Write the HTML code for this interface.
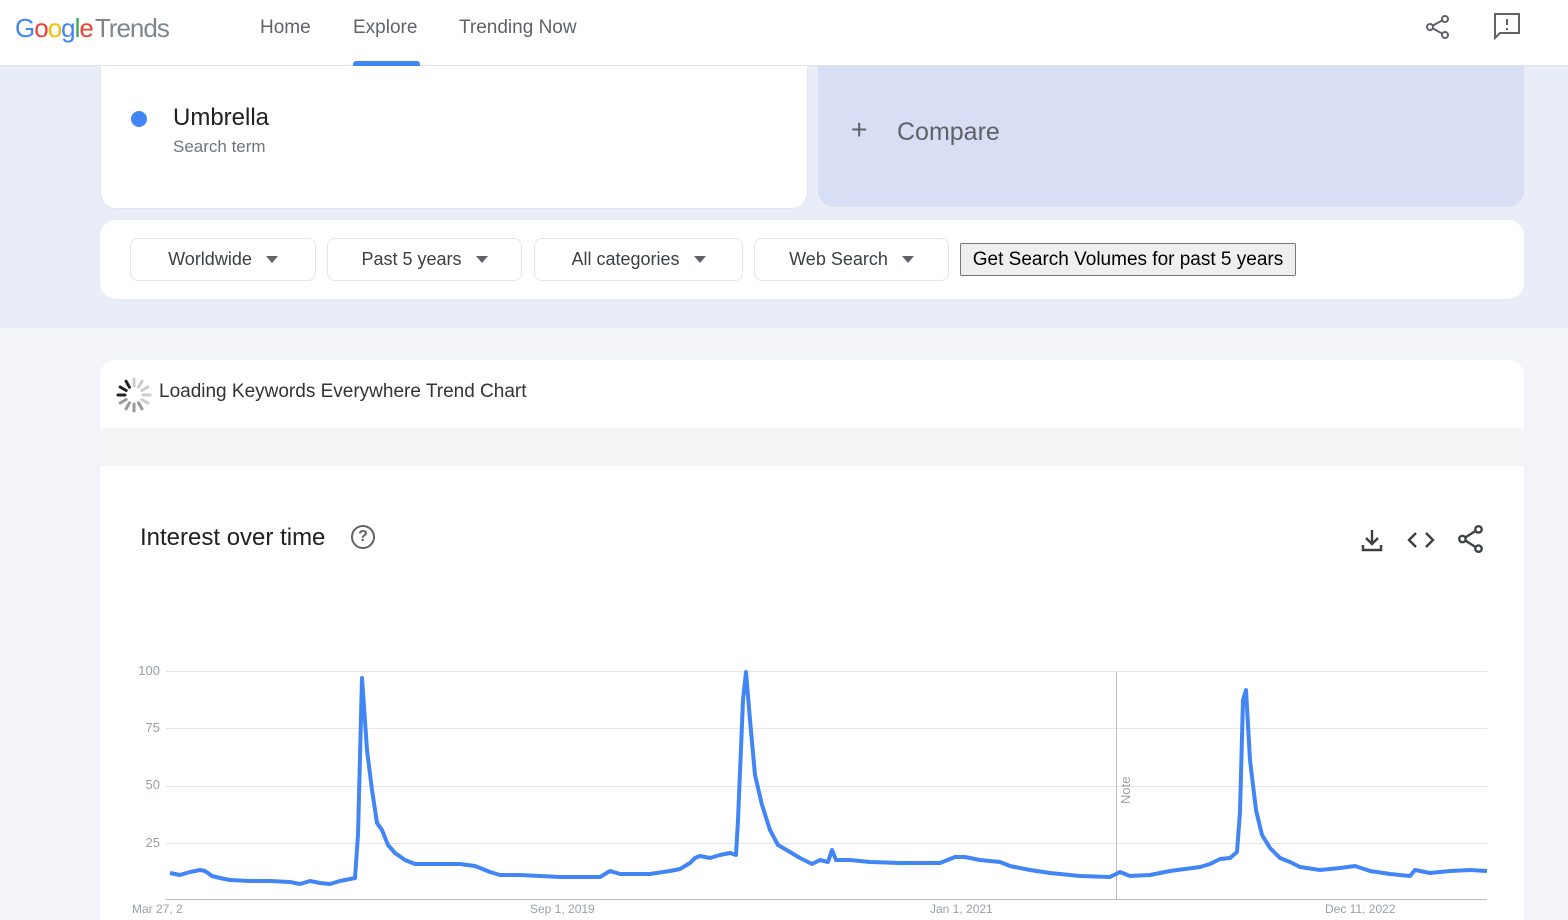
<!DOCTYPE html>
<html><head><meta charset="utf-8"><style>
*{margin:0;padding:0;box-sizing:border-box}
body{width:1568px;height:908px;overflow:hidden;background:#f3f4f9;font-family:"Liberation Sans",Arial,sans-serif;position:relative;color:#202124}
.abs{position:absolute}
.hdr{left:0;top:0;width:1568px;height:66px;background:#fff;border-bottom:1px solid #e2e4ea}
.nav{top:17px;font-size:19px;color:#5f6368}
.band{left:0;top:66px;width:1568px;height:262px;background:#e9edf8}
.card{background:#fff}
.btn{top:238px;height:43px;border:1px solid #e3e5ea;border-radius:8px;background:#fff;font-size:18px;color:#3c4043;display:flex;align-items:center;justify-content:center;gap:14px}
.tri{width:0;height:0;border-left:6px solid transparent;border-right:6px solid transparent;border-top:7px solid #5f6368}
.yl{left:120px;width:40px;text-align:right;font-size:13px;color:#9aa0a6}
.gl{left:166px;width:1321px;height:1px;background:#e6e6e6}
</style></head><body>
<div class="abs hdr"></div>
<div class="abs" style="left:15px;top:13px;font-size:26px;letter-spacing:-1px"><span style="color:#4285f4">G</span><span style="color:#ea4335">o</span><span style="color:#fbbc05">o</span><span style="color:#4285f4">g</span><span style="color:#34a853">l</span><span style="color:#ea4335">e</span><span style="color:#80868b;margin-left:2px">Trends</span></div>
<div class="abs nav" style="left:260px">Home</div>
<div class="abs nav" style="left:353px">Explore</div>
<div class="abs" style="left:353px;top:61px;width:67px;height:5px;background:#4285f4;border-radius:3px 3px 0 0"></div>
<div class="abs nav" style="left:459px">Trending Now</div>
<svg class="abs" style="left:1424px;top:13px" width="28" height="28" viewBox="0 0 28 28" fill="none" stroke="#5f6368" stroke-width="2"><circle cx="21" cy="6" r="3"/><circle cx="6" cy="14" r="3"/><circle cx="21" cy="22" r="3"/><path d="M8.7 12.6L18.3 7.4M8.7 15.4L18.3 20.6"/></svg>
<svg class="abs" style="left:1493px;top:12px" width="28" height="28" viewBox="0 0 28 28" fill="none" stroke="#5f6368" stroke-width="2"><path d="M2 2H26V21H7L2 26Z"/><path d="M14 7V13M14 16V18" /></svg>
<div class="abs band"></div>
<div class="abs card" style="left:100px;top:66px;width:708px;height:143px;border-radius:0 0 16px 16px;border:1px solid #e3e6ee;border-top:none"></div>
<div class="abs" style="left:131px;top:111px;width:16px;height:16px;border-radius:50%;background:#4285f4"></div>
<div class="abs" style="left:173px;top:104px;font-size:24px;color:#202124">Umbrella</div>
<div class="abs" style="left:173px;top:137px;font-size:17px;color:#70757a">Search term</div>
<div class="abs" style="left:818px;top:66px;width:706px;height:141px;background:#d8def3;border-radius:0 0 16px 16px"></div>
<div class="abs" style="left:851px;top:114px;font-size:28px;color:#5f6368">+</div>
<div class="abs" style="left:897px;top:118px;font-size:25px;color:#5f6368">Compare</div>
<div class="abs card" style="left:100px;top:220px;width:1424px;height:79px;border-radius:16px"></div>
<div class="abs btn" style="left:130px;width:186px">Worldwide<span class="tri"></span></div>
<div class="abs btn" style="left:327px;width:195px">Past 5 years<span class="tri"></span></div>
<div class="abs btn" style="left:534px;width:209px">All categories<span class="tri"></span></div>
<div class="abs btn" style="left:754px;width:195px">Web Search<span class="tri"></span></div>
<div class="abs" style="left:960px;top:243px;width:336px;height:33px;border:1px solid #767676;border-radius:2px;background:#efefef;font-size:19px;color:#000;display:flex;align-items:center;justify-content:center">Get Search Volumes for past 5 years</div>
<div class="abs card" style="left:100px;top:360px;width:1424px;height:560px;border-radius:16px 16px 0 0"></div>
<div class="abs" style="left:100px;top:428px;width:1424px;height:38px;background:#f5f5f5"></div>
<svg class="abs" style="left:114px;top:375px" width="40" height="40" viewBox="-20 -20 40 40" stroke-linecap="round" stroke-width="3">
<g stroke="#222"><line x1="0" y1="-9" x2="0" y2="-16" transform="rotate(-30)"/><line x1="0" y1="-9" x2="0" y2="-16" transform="rotate(-60)"/><line x1="0" y1="-9" x2="0" y2="-16" transform="rotate(-90)"/></g>
<g stroke="#999"><line x1="0" y1="-9" x2="0" y2="-16" transform="rotate(-120)"/><line x1="0" y1="-9" x2="0" y2="-16" transform="rotate(-150)"/><line x1="0" y1="-9" x2="0" y2="-16" transform="rotate(180)"/><line x1="0" y1="-9" x2="0" y2="-16" transform="rotate(150)"/></g>
<g stroke="#ccc"><line x1="0" y1="-9" x2="0" y2="-16" transform="rotate(0)"/><line x1="0" y1="-9" x2="0" y2="-16" transform="rotate(30)"/><line x1="0" y1="-9" x2="0" y2="-16" transform="rotate(60)"/><line x1="0" y1="-9" x2="0" y2="-16" transform="rotate(90)"/><line x1="0" y1="-9" x2="0" y2="-16" transform="rotate(120)"/></g></svg>
<div class="abs" style="left:159px;top:381px;font-size:19px;color:#333">Loading Keywords Everywhere Trend Chart</div>
<div class="abs" style="left:140px;top:524px;font-size:24px;color:#202124">Interest over time</div>
<div class="abs" style="left:351px;top:525px;width:24px;height:24px;border:2px solid #5f6368;border-radius:50%;font-size:16px;color:#5f6368;text-align:center;line-height:20px;font-weight:bold">?</div>
<svg class="abs" style="left:1358px;top:526px" width="28" height="28" viewBox="0 0 28 28" fill="none" stroke="#3c4043" stroke-width="2.4"><path d="M14 4V18M8 12L14 18L20 12M5 19V24H23V19"/></svg>
<svg class="abs" style="left:1406px;top:526px" width="30" height="28" viewBox="0 0 30 28" fill="none" stroke="#3c4043" stroke-width="2.4"><path d="M10 7L3 14L10 21M20 7L27 14L20 21"/></svg>
<svg class="abs" style="left:1456px;top:524px" width="30" height="30" viewBox="0 0 28 28" fill="none" stroke="#3c4043" stroke-width="2.2"><circle cx="21" cy="5" r="3"/><circle cx="6" cy="14" r="3"/><circle cx="21" cy="23" r="3"/><path d="M8.7 12.6L18.3 6.4M8.7 15.4L18.3 21.6"/></svg>
<div class="abs yl" style="top:663px">100</div><div class="abs gl" style="top:671px"></div>
<div class="abs yl" style="top:720px">75</div><div class="abs gl" style="top:728px"></div>
<div class="abs yl" style="top:777px">50</div><div class="abs gl" style="top:786px"></div>
<div class="abs yl" style="top:835px">25</div><div class="abs gl" style="top:843px"></div>
<div class="abs" style="left:166px;top:899px;width:1321px;height:1px;background:#bdbdbd"></div>
<div class="abs" style="left:1116px;top:672px;width:1px;height:228px;background:#bdbdbd"></div>
<div class="abs" style="left:1118px;font-size:13px;color:#9aa0a6;transform:rotate(-90deg);transform-origin:left top;top:804px">Note</div>
<div class="abs" style="left:132px;top:902px;font-size:12px;color:#9aa0a6">Mar 27, 2</div>
<div class="abs" style="left:530px;top:902px;font-size:12px;color:#9aa0a6">Sep 1, 2019</div>
<div class="abs" style="left:930px;top:902px;font-size:12px;color:#9aa0a6">Jan 1, 2021</div>
<div class="abs" style="left:1325px;top:902px;font-size:12px;color:#9aa0a6">Dec 11, 2022</div>
<svg class="abs" style="left:0;top:0" width="1568" height="908"><polyline fill="none" stroke="#4285f4" stroke-width="4" stroke-linejoin="round" points="170,873 180,875 190,872 200,870 205,871 212,876 220,878 230,880 250,881 270,881 290,882 300,884 310,881 320,883 330,884 340,881 350,879 355,878 358,835 362,678 367,750 372,790 377,823 382,830 388,845 395,853 405,860 415,864 430,864 445,864 460,864 475,866 490,872 500,875 520,875 540,876 560,877 600,877 610,871 620,874 650,874 670,871 680,869 690,863 695,858 700,856 710,858 720,855 730,853 736,855 738,820 743,700 746,672 750,720 755,775 762,805 770,830 778,845 790,852 800,858 812,864 820,860 828,862 832,850 836,860 850,860 870,862 900,863 940,863 955,857 965,857 980,860 1000,862 1010,866 1030,870 1050,873 1080,876 1110,877 1120,872 1130,876 1150,875 1170,871 1200,867 1210,864 1220,859 1230,858 1237,852 1240,812 1243,700 1246,690 1250,760 1256,810 1262,835 1270,848 1280,858 1290,862 1300,867 1320,870 1340,868 1355,866 1370,871 1390,874 1410,876 1415,870 1430,873 1450,871 1470,870 1487,871"/></svg>
</body></html>
